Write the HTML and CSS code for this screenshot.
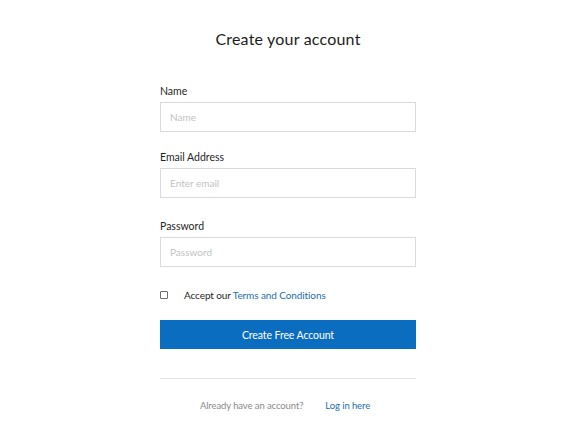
FILE: index.html
```html
<!DOCTYPE html>
<html lang="en">
<head>
<meta charset="utf-8">
<title>Create your account</title>
<link rel="stylesheet" href="styles.css">
</head>
<body>
<main class="page">
  <h1 class="title">Create your account</h1>
  <form class="form">
    <div class="field">
      <label class="label" for="name">Name</label>
      <input class="input" id="name" type="text" placeholder="Name">
    </div>
    <div class="field">
      <label class="label" for="email">Email Address</label>
      <input class="input" id="email" type="email" placeholder="Enter email">
    </div>
    <div class="field field-last">
      <label class="label" for="password">Password</label>
      <input class="input" id="password" type="password" placeholder="Password">
    </div>
    <label class="terms">
      <span class="checkbox"></span>
      <span class="terms-text">Accept our <a class="link" href="#">Terms and Conditions</a></span>
    </label>
    <button class="submit" type="button">Create Free Account</button>
    <hr class="divider">
    <p class="footer">
      <span class="muted">Already have an account?</span>
      <a class="link" href="#">Log in here</a>
    </p>
  </form>
</main>
</body>
</html>
```

FILE: styles.css
```css
* {
  box-sizing: border-box;
}

html, body {
  margin: 0;
  padding: 0;
  background: #ffffff;
}

body {
  font-family: Lato, "Open Sans", "Liberation Sans", sans-serif;
  color: #1f1f1f;
}

.page {
  display: flex;
  flex-direction: column;
  align-items: center;
  padding-top: 28px;
}

.title {
  margin: 0;
  font-size: 16px;
  line-height: 22px;
  font-weight: 400;
  color: #1c1c1c;
  letter-spacing: 0.2px;
}

.form {
  width: 256px;
  margin-top: 34px;
  display: flex;
  flex-direction: column;
}

.field {
  display: flex;
  flex-direction: column;
  margin-bottom: 18px;
}

.field-last {
  margin-top: 3px;
  margin-bottom: 0;
}

.label {
  font-size: 10.5px;
  line-height: 14px;
  margin-bottom: 4px;
  color: #1f1f1f;
}

.input {
  height: 30px;
  border: 1px solid #dadada;
  border-radius: 0;
  padding: 0 9px;
  font-family: inherit;
  font-size: 10px;
  color: #333;
  background: #fff;
  outline: none;
}

.input::placeholder {
  color: #c2c2c2;
}

.terms {
  display: flex;
  align-items: center;
  margin-top: 22px;
  height: 12px;
}

.checkbox {
  width: 8px;
  height: 8px;
  border: 1px solid #6a6a6a;
  border-radius: 1px;
  margin-right: 16px;
  flex: none;
}

.terms-text {
  font-size: 10px;
  line-height: 12px;
  letter-spacing: -0.1px;
  color: #1f1f1f;
}

.link {
  color: #1d6db3;
  text-decoration: none;
}

.submit {
  margin-top: 19px;
  height: 29px;
  border: none;
  background: #0b6dc0;
  color: #ffffff;
  font-family: inherit;
  font-size: 10.5px;
  letter-spacing: -0.1px;
  cursor: pointer;
}

.divider {
  margin: 29px 0 0;
  border: none;
  border-top: 1px solid #e6e6e6;
  height: 0;
}

.footer {
  margin: 20px 0 0;
  display: flex;
  justify-content: center;
  gap: 22px;
  font-size: 9.5px;
  line-height: 14px;
  letter-spacing: -0.1px;
  padding-right: 6px;
}

.muted {
  color: #8a8a8a;
}
```
